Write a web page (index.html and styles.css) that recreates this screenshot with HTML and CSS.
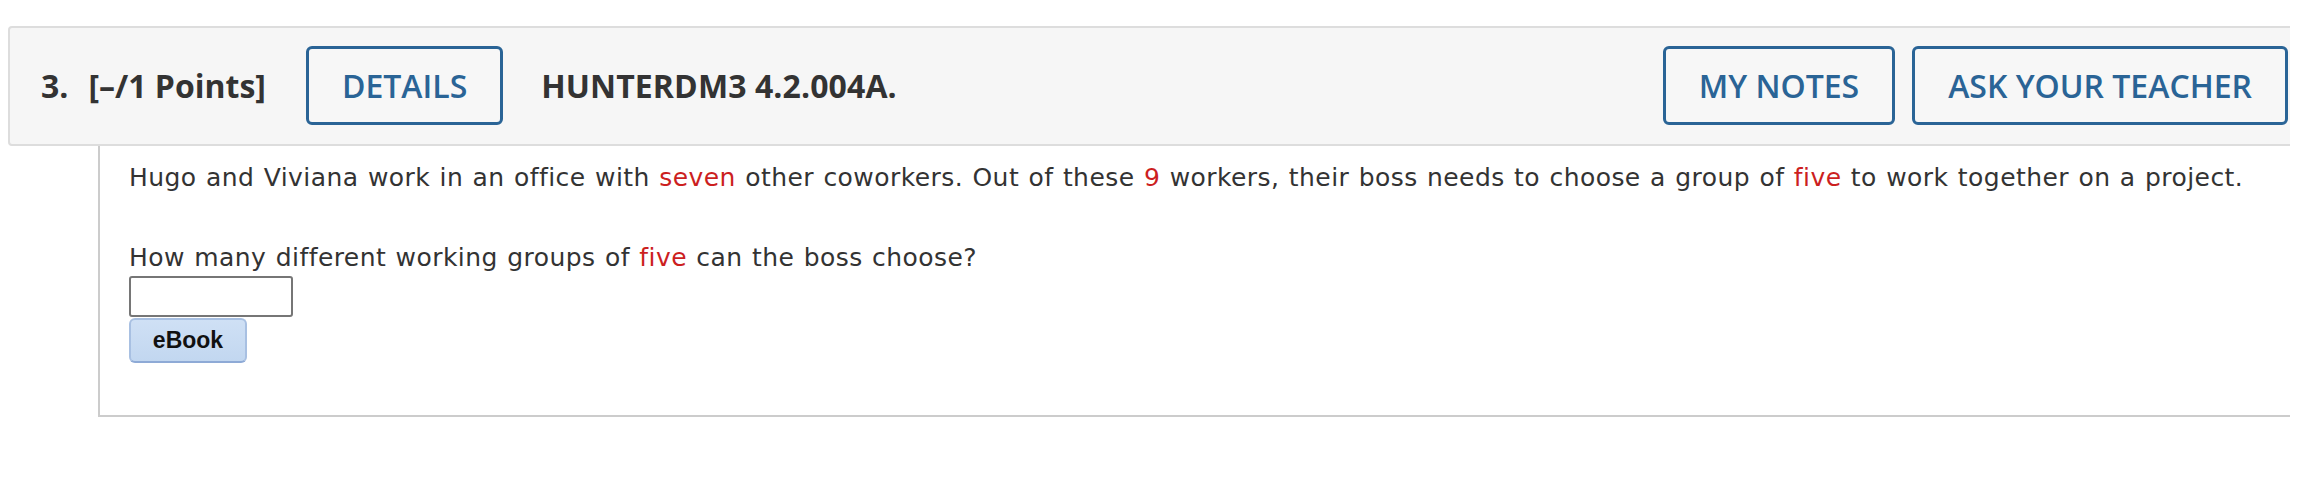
FILE: index.html
```html
<!DOCTYPE html>
<html>
<head>
<meta charset="utf-8">
<link rel="stylesheet" href="styles.css">
</head>
<body>
<div class="question">
  <div class="q-header">
    <span class="q-num">3.</span>
    <span class="q-points">[–/1 Points]</span>
    <button class="q-btn q-details">DETAILS</button>
    <span class="q-title">HUNTERDM3 4.2.004A.</span>
    <span class="q-spacer"></span>
    <button class="q-btn">MY NOTES</button>
    <button class="q-btn">ASK YOUR TEACHER</button>
  </div>
  <div class="q-body">
    <p class="q-text">Hugo and Viviana work in an office with <span class="red">seven</span> other coworkers. Out of these <span class="red">9</span> workers, their boss needs to choose a group of <span class="red">five</span> to work together on a project.</p>
    <p class="q-text">How many different working groups of <span class="red">five</span> can the boss choose?</p>
    <input class="answer" type="text">
    <button class="ebook">eBook</button>
  </div>
</div>
</body>
</html>
```

FILE: styles.css
```css
html, body {
  background: #ffffff;
}
body {
  margin: 8px;
  overflow: hidden;
}
.question {
  margin-top: 18px;
  margin-right: -14px;
}
.q-header {
  display: flex;
  align-items: center;
  background: #f6f6f6;
  border: 2px solid #dddddd;
  border-radius: 4px;
  padding: 18px 14px 19px 31px;
  font-family: "Open Sans", sans-serif;
  font-weight: 700;
  font-size: 32px;
  color: #333333;
}
.q-points {
  margin-left: 20px;
  margin-right: 40px;
}
.q-title {
  margin-left: 38px;
  letter-spacing: 0.1px;
}
.q-spacer {
  flex: 1;
}
.q-btn {
  box-sizing: border-box;
  height: 79px;
  padding: 0 33px;
  background: #f7f7f7;
  border: 3px solid #2a6496;
  border-radius: 6px;
  color: #2a6496;
  font-family: "Open Sans", sans-serif;
  font-weight: 600;
  font-size: 32px;
  line-height: 1;
}
.q-btn + .q-btn {
  margin-left: 17px;
}
.q-details {
  margin: 0;
}
.q-body {
  margin-left: 90px;
  border-left: 2px solid #cccccc;
  border-bottom: 2px solid #cccccc;
  padding: 13px 0 52px 29px;
  font-family: "DejaVu Sans", Verdana, sans-serif;
  font-size: 25px;
  letter-spacing: 0.44px;
  word-spacing: 1px;
  color: #333333;
}
.q-text {
  margin: 0 0 42px 0;
  line-height: 38px;
  white-space: nowrap;
}
.q-text:last-of-type {
  margin-bottom: 0;
}
.red {
  color: #cc1f1f;
}
.answer {
  display: block;
  box-sizing: border-box;
  width: 164px;
  height: 41px;
  margin: -1px 0 0 0;
  border: 2px solid #767676;
  border-radius: 3px;
  background: #ffffff;
}
.ebook {
  display: block;
  box-sizing: border-box;
  width: 118px;
  height: 45px;
  margin-top: 1px;
  padding: 0;
  background: linear-gradient(#cfe0f5, #c2d7f0);
  border: 2px solid #a8c0e2;
  border-bottom-color: #8eaad6;
  border-radius: 6px;
  font-family: "Liberation Sans", Arial, sans-serif;
  font-weight: 700;
  font-size: 23px;
  letter-spacing: 0;
  word-spacing: 0;
  color: #111111;
}
```
